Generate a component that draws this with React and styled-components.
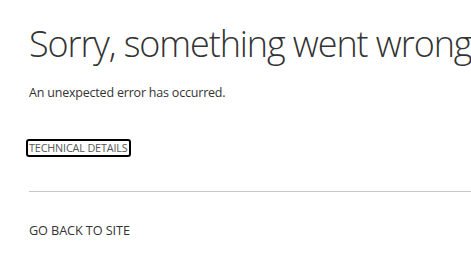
import React from "react";
import styled, { createGlobalStyle } from "styled-components";

const GlobalStyle = createGlobalStyle`
  html, body {
    margin: 0;
    padding: 0;
    background: #fff;
    overflow: hidden;
  }
  body {
    font-family: "Open Sans", "Noto Sans", sans-serif;
    color: #333;
  }
`;

const App = () => {
  return (
    <>
      <GlobalStyle />
      <Page>
        <Title>Sorry, something went wrong</Title>
        <Message>An unexpected error has occurred.</Message>
        <DetailsButton type="button">TECHNICAL DETAILS</DetailsButton>
        <Divider />
        <BackLink href="#">GO BACK TO SITE</BackLink>
      </Page>
    </>
  );
};

export default App;

const Page = styled.div`
  display: flex;
  flex-direction: column;
  align-items: flex-start;
  padding: 19px 0 0 29px;
  white-space: nowrap;
`;

const Title = styled.h1`
  margin: 0;
  font-family: "Open Sans", sans-serif;
  font-weight: 300;
  font-size: 36px;
  line-height: 50px;
  color: #333;
  letter-spacing: -1.1px;
`;

const Message = styled.p`
  margin: 15px 0 0 0;
  font-size: 12.5px;
  line-height: 18px;
  color: #333;
  letter-spacing: -0.2px;
`;

const DetailsButton = styled.button`
  margin: 37px 0 0 -3px;
  height: 18px;
  padding: 0 1px;
  font-family: "Open Sans", sans-serif;
  font-size: 10.8px;
  line-height: 14px;
  color: #555;
  background: none;
  border: 2px solid #000;
  border-radius: 3px;
  letter-spacing: -0.15px;
  cursor: pointer;
`;

const Divider = styled.hr`
  align-self: stretch;
  margin: 34px 0 0 0;
  border: 0;
  border-top: 1px solid #c8c8c8;
  height: 0;
`;

const BackLink = styled.a`
  margin-top: 29px;
  font-size: 12.7px;
  line-height: 18px;
  color: #333;
  text-decoration: none;
  letter-spacing: -0.1px;
`;
